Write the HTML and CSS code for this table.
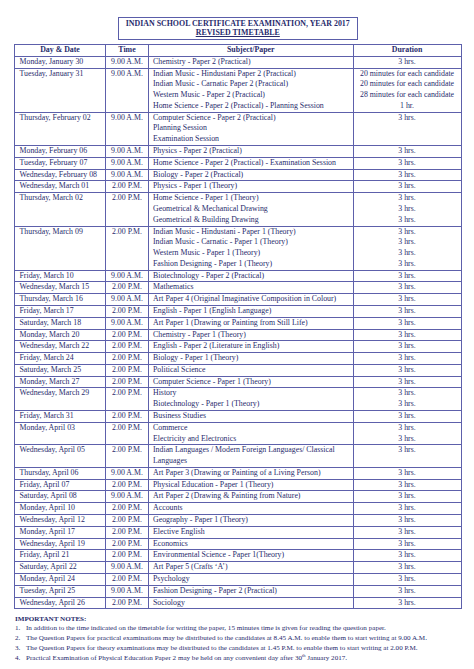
FILE: index.html
```html
<!DOCTYPE html>
<html lang="en">
<head>
<meta charset="utf-8">
<title>ISC 2017 Revised Timetable</title>
<link rel="stylesheet" href="styles.css">
</head>
<body>
<div class="page">
  <div class="title">
    <div>INDIAN SCHOOL CERTIFICATE EXAMINATION, YEAR 2017</div>
    <div class="sub">REVISED TIMETABLE</div>
  </div>

  <table class="schedule">
    <colgroup>
      <col class="c-day"><col class="c-time"><col class="c-subj"><col class="c-dur">
    </colgroup>
    <thead>
      <tr><th>Day &amp; Date</th><th>Time</th><th>Subject/Paper</th><th>Duration</th></tr>
    </thead>
    <tbody>
      <tr><td class="day">Monday, January 30</td><td class="time">9.00 A.M.</td><td class="subj"><div>Chemistry - Paper 2 (Practical)</div></td><td class="dur"><div>3 hrs.</div></td></tr>
      <tr><td class="day">Tuesday, January 31</td><td class="time">9.00 A.M.</td>
        <td class="subj"><div>Indian Music - Hindustani Paper 2 (Practical)</div><div>Indian Music - Carnatic Paper 2 (Practical)</div><div>Western Music - Paper 2 (Practical)</div><div>Home Science - Paper 2 (Practical) - Planning Session</div></td>
        <td class="dur"><div>20 minutes for each candidate</div><div>20 minutes for each candidate</div><div>28 minutes for each candidate</div><div>1 hr.</div></td></tr>
      <tr><td class="day">Thursday, February 02</td><td class="time">9.00 A.M.</td>
        <td class="subj"><div>Computer Science - Paper 2 (Practical)</div><div>Planning Session</div><div>Examination Session</div></td>
        <td class="dur"><div>3 hrs.</div></td></tr>
      <tr><td class="day">Monday, February 06</td><td class="time">9.00 A.M.</td><td class="subj"><div>Physics - Paper 2 (Practical)</div></td><td class="dur"><div>3 hrs.</div></td></tr>
      <tr><td class="day">Tuesday, February 07</td><td class="time">9.00 A.M.</td><td class="subj"><div>Home Science - Paper 2 (Practical) - Examination Session</div></td><td class="dur"><div>3 hrs.</div></td></tr>
      <tr><td class="day">Wednesday, February 08</td><td class="time">9.00 A.M.</td><td class="subj"><div>Biology - Paper 2 (Practical)</div></td><td class="dur"><div>3 hrs.</div></td></tr>
      <tr><td class="day">Wednesday, March 01</td><td class="time">2.00 P.M.</td><td class="subj"><div>Physics - Paper 1 (Theory)</div></td><td class="dur"><div>3 hrs.</div></td></tr>
      <tr><td class="day">Thursday, March 02</td><td class="time">2.00 P.M.</td>
        <td class="subj"><div>Home Science - Paper 1 (Theory)</div><div>Geometrical &amp; Mechanical Drawing</div><div>Geometrical &amp; Building Drawing</div></td>
        <td class="dur"><div>3 hrs.</div><div>3 hrs.</div><div>3 hrs.</div></td></tr>
      <tr><td class="day">Thursday, March 09</td><td class="time">2.00 P.M.</td>
        <td class="subj"><div>Indian Music - Hindustani - Paper 1 (Theory)</div><div>Indian Music - Carnatic - Paper 1 (Theory)</div><div>Western Music - Paper 1 (Theory)</div><div>Fashion Designing - Paper 1 (Theory)</div></td>
        <td class="dur"><div>3 hrs.</div><div>3 hrs.</div><div>3 hrs.</div><div>3 hrs.</div></td></tr>
      <tr><td class="day">Friday, March 10</td><td class="time">9.00 A.M.</td><td class="subj"><div>Biotechnology - Paper 2 (Practical)</div></td><td class="dur"><div>3 hrs.</div></td></tr>
      <tr><td class="day">Wednesday, March 15</td><td class="time">2.00 P.M.</td><td class="subj"><div>Mathematics</div></td><td class="dur"><div>3 hrs.</div></td></tr>
      <tr><td class="day">Thursday, March 16</td><td class="time">9.00 A.M.</td><td class="subj"><div>Art Paper 4 (Original Imaginative Composition in Colour)</div></td><td class="dur"><div>3 hrs.</div></td></tr>
      <tr><td class="day">Friday, March 17</td><td class="time">2.00 P.M.</td><td class="subj"><div>English - Paper 1 (English Language)</div></td><td class="dur"><div>3 hrs.</div></td></tr>
      <tr><td class="day">Saturday, March 18</td><td class="time">9.00 A.M.</td><td class="subj"><div>Art Paper 1 (Drawing or Painting from Still Life)</div></td><td class="dur"><div>3 hrs.</div></td></tr>
      <tr><td class="day">Monday, March 20</td><td class="time">2.00 P.M.</td><td class="subj"><div>Chemistry - Paper 1 (Theory)</div></td><td class="dur"><div>3 hrs.</div></td></tr>
      <tr><td class="day">Wednesday, March 22</td><td class="time">2.00 P.M.</td><td class="subj"><div>English - Paper 2 (Literature in English)</div></td><td class="dur"><div>3 hrs.</div></td></tr>
      <tr><td class="day">Friday, March 24</td><td class="time">2.00 P.M.</td><td class="subj"><div>Biology - Paper 1 (Theory)</div></td><td class="dur"><div>3 hrs.</div></td></tr>
      <tr><td class="day">Saturday, March 25</td><td class="time">2.00 P.M.</td><td class="subj"><div>Political Science</div></td><td class="dur"><div>3 hrs.</div></td></tr>
      <tr><td class="day">Monday, March 27</td><td class="time">2.00 P.M.</td><td class="subj"><div>Computer Science - Paper 1 (Theory)</div></td><td class="dur"><div>3 hrs.</div></td></tr>
      <tr><td class="day">Wednesday, March 29</td><td class="time">2.00 P.M.</td>
        <td class="subj"><div>History</div><div>Biotechnology - Paper 1 (Theory)</div></td>
        <td class="dur"><div>3 hrs.</div><div>3 hrs.</div></td></tr>
      <tr><td class="day">Friday, March 31</td><td class="time">2.00 P.M.</td><td class="subj"><div>Business Studies</div></td><td class="dur"><div>3 hrs.</div></td></tr>
      <tr><td class="day">Monday, April 03</td><td class="time">2.00 P.M.</td>
        <td class="subj"><div>Commerce</div><div>Electricity and Electronics</div></td>
        <td class="dur"><div>3 hrs.</div><div>3 hrs.</div></td></tr>
      <tr><td class="day">Wednesday, April 05</td><td class="time">2.00 P.M.</td>
        <td class="subj"><div>Indian Languages / Modern Foreign Languages/ Classical<br>Languages</div></td>
        <td class="dur"><div>3 hrs.</div></td></tr>
      <tr><td class="day">Thursday, April 06</td><td class="time">9.00 A.M.</td><td class="subj"><div>Art Paper 3 (Drawing or Painting of a Living Person)</div></td><td class="dur"><div>3 hrs.</div></td></tr>
      <tr><td class="day">Friday, April 07</td><td class="time">2.00 P.M.</td><td class="subj"><div>Physical Education - Paper 1 (Theory)</div></td><td class="dur"><div>3 hrs.</div></td></tr>
      <tr><td class="day">Saturday, April 08</td><td class="time">9.00 A.M.</td><td class="subj"><div>Art Paper 2 (Drawing &amp; Painting from Nature)</div></td><td class="dur"><div>3 hrs.</div></td></tr>
      <tr><td class="day">Monday, April 10</td><td class="time">2.00 P.M.</td><td class="subj"><div>Accounts</div></td><td class="dur"><div>3 hrs.</div></td></tr>
      <tr><td class="day">Wednesday, April 12</td><td class="time">2.00 P.M.</td><td class="subj"><div>Geography - Paper 1 (Theory)</div></td><td class="dur"><div>3 hrs.</div></td></tr>
      <tr><td class="day">Monday, April 17</td><td class="time">2.00 P.M.</td><td class="subj"><div>Elective English</div></td><td class="dur"><div>3 hrs.</div></td></tr>
      <tr><td class="day">Wednesday, April 19</td><td class="time">2.00 P.M.</td><td class="subj"><div>Economics</div></td><td class="dur"><div>3 hrs.</div></td></tr>
      <tr><td class="day">Friday, April 21</td><td class="time">2.00 P.M.</td><td class="subj"><div>Environmental Science - Paper 1(Theory)</div></td><td class="dur"><div>3 hrs.</div></td></tr>
      <tr><td class="day">Saturday, April 22</td><td class="time">9.00 A.M.</td><td class="subj"><div>Art Paper 5 (Crafts ‘A’)</div></td><td class="dur"><div>3 hrs.</div></td></tr>
      <tr><td class="day">Monday, April 24</td><td class="time">2.00 P.M.</td><td class="subj"><div>Psychology</div></td><td class="dur"><div>3 hrs.</div></td></tr>
      <tr><td class="day">Tuesday, April 25</td><td class="time">9.00 A.M.</td><td class="subj"><div>Fashion Designing - Paper 2 (Practical)</div></td><td class="dur"><div>3 hrs.</div></td></tr>
      <tr><td class="day">Wednesday, April 26</td><td class="time">2.00 P.M.</td><td class="subj"><div>Sociology</div></td><td class="dur"><div>3 hrs.</div></td></tr>
    </tbody>
  </table>

  <div class="notes">
    <div class="notes-head">IMPORTANT NOTES:</div>
    <div class="note"><span class="num">1.</span><span>In addition to the time indicated on the timetable for writing the paper, 15 minutes time is given for reading the question paper.</span></div>
    <div class="note"><span class="num">2.</span><span>The Question Papers for practical examinations may be distributed to the candidates at 8.45 A.M. to enable them to start writing at 9.00 A.M.</span></div>
    <div class="note"><span class="num">3.</span><span>The Question Papers for theory examinations may be distributed to the candidates at 1.45 P.M. to enable them to start writing at 2.00 P.M.</span></div>
    <div class="note"><span class="num">4.</span><span>Practical Examination of Physical Education Paper 2 may be held on any convenient day after 30<sup class="ord">th</sup> January 2017.</span></div>
  </div>
</div>
</body>
</html>
```

FILE: styles.css
```css
html, body {
  margin: 0;
  padding: 0;
  background: #ffffff;
}

body {
  font-family: "Liberation Serif", "Times New Roman", serif;
  color: #282b6c;
}

.page {
  padding-top: 16.5px;
}

.title {
  box-sizing: border-box;
  width: 239.5px;
  margin-left: 118px;
  border: 1px solid #5a5da9;
  padding: 1.5px 0;
  text-align: center;
  font-weight: bold;
  font-size: 7.9px;
  line-height: 9px;
  white-space: nowrap;
}

.title .sub {
  text-decoration: underline;
}

.schedule {
  margin: 4.5px 0 0 14px;
  width: 446.5px;
  border-collapse: collapse;
  table-layout: fixed;
  font-size: 7.85px;
  line-height: 10.78px;
}

.c-day { width: 91px; }
.c-time { width: 43px; }
.c-subj { width: 204.5px; }
.c-dur { width: 108px; }

.schedule th,
.schedule td {
  border: 1px solid #5d60ab;
  padding: 0;
  vertical-align: top;
  white-space: nowrap;
  overflow: hidden;
}

.schedule th {
  font-weight: bold;
  text-align: center;
}

.day {
  padding-left: 4.5px !important;
}

.time {
  text-align: center;
}

.subj {
  padding-left: 4px !important;
}

.dur {
  text-align: center;
}

.notes {
  margin: 5.5px 0 0 15px;
  font-size: 7.1px;
  line-height: 9.7px;
  white-space: nowrap;
}

.notes-head {
  font-weight: bold;
  font-size: 7.1px;
}

.note {
  display: flex;
}

.num {
  flex: 0 0 11px;
}

.ord {
  font-size: 4.5px;
  line-height: 0;
  vertical-align: 3px;
}
```
